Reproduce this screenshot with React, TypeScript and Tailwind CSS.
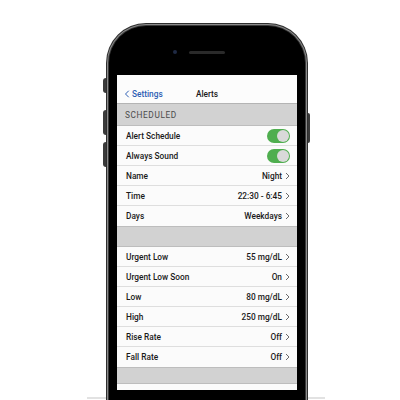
import { ChevronLeft } from 'lucide-react'

type Row = { label: string; value?: string; toggle?: boolean }

const SCHEDULED: Row[] = [
  { label: 'Alert Schedule', toggle: true },
  { label: 'Always Sound', toggle: true },
  { label: 'Name', value: 'Night' },
  { label: 'Time', value: '22:30 - 6:45' },
  { label: 'Days', value: 'Weekdays' },
]

const ALERTS: Row[] = [
  { label: 'Urgent Low', value: '55 mg/dL' },
  { label: 'Urgent Low Soon', value: 'On' },
  { label: 'Low', value: '80 mg/dL' },
  { label: 'High', value: '250 mg/dL' },
  { label: 'Rise Rate', value: 'Off' },
  { label: 'Fall Rate', value: 'Off' },
]

function Chevron() {
  return (
    <svg width="5" height="8" viewBox="0 0 5 8" className="ml-[3px] shrink-0">
      <path d="M1 1l3 3-3 3" fill="none" stroke="#6b6b6b" strokeWidth="1" />
    </svg>
  )
}

function Toggle() {
  return (
    <div className="w-[23px] h-[14px] rounded-full bg-[#4fae4f] flex items-center justify-end pr-px">
      <div className="w-[12px] h-[12px] rounded-full bg-[#d9d9d9]" />
    </div>
  )
}

function SettingRow({ row, last }: { row: Row; last?: boolean }) {
  return (
    <div className={`h-[20px] flex items-center justify-between pl-[9px] pr-[7px] pt-px bg-[#fbfbfb] ${last ? '' : 'border-b border-[#dedede]'}`}>
      <span>{row.label}</span>
      {row.toggle ? (
        <Toggle />
      ) : (
        <span className="flex items-center">
          {row.value}
          <Chevron />
        </span>
      )}
    </div>
  )
}

export default function App() {
  return (
    <div className="relative w-[400px] h-[400px] bg-white overflow-hidden" style={{ fontFamily: 'Roboto, "Liberation Sans", Arial, sans-serif' }}>
      {/* floor line */}
      <div className="absolute left-[87px] top-[397px] w-[238px] h-[2px] bg-[#e2e2e2]" />

      <div className="pt-[23px] pl-[106px]">
        <div className="relative w-[202px] h-[420px]">
          {/* side buttons */}
          <div className="absolute -left-[3px] top-[55px] w-[3px] h-[15px] rounded-l-sm bg-[#3a3a3a]" />
          <div className="absolute -left-[3px] top-[87px] w-[3px] h-[25px] rounded-l-sm bg-[#3a3a3a]" />
          <div className="absolute -left-[3px] top-[119px] w-[3px] h-[25px] rounded-l-sm bg-[#3a3a3a]" />
          <div className="absolute -right-[2px] top-[90px] w-[2px] h-[30px] rounded-r-sm bg-[#3a3a3a]" />

          <div className="w-full h-full rounded-[40px] bg-[#2e2e2e] p-px">
            <div className="w-full h-full rounded-[39px] bg-[#8a8a8a] p-px">
              <div className="w-full h-full rounded-[38px] bg-[#3a3a3a] p-px">
                <div className="w-full h-full rounded-[37px] bg-black pt-[49px] px-[8px] flex flex-col">
                  <div className="w-[180px] h-[315px] bg-white flex flex-col text-[8.3px] font-medium leading-none text-[#1a1a1a]">
                    {/* nav bar */}
                    <div className="relative h-[29px] flex items-center pt-[10px] border-b border-[#b4b4b4] bg-[#fcfcfc]">
                      <div className="flex items-center pl-[4px] text-[#2e5fb4]">
                        <ChevronLeft size={12} strokeWidth={2} className="-mr-[1px]" />
                        <span>Settings</span>
                      </div>
                      <div className="absolute inset-0 pt-[10px] flex items-center justify-center">Alerts</div>
                    </div>
                    {/* scheduled header */}
                    <div className="h-[22px] flex items-center pl-[8px] pt-px bg-[#d2d2d2] border-b border-[#bdbdbd] text-[#4a4a4a] font-normal tracking-[0.6px]">
                      SCHEDULED
                    </div>
                    {SCHEDULED.map((r, i) => (
                      <SettingRow key={r.label} row={r} last={i === SCHEDULED.length - 1} />
                    ))}
                    <div className="h-[21px] bg-[#d2d2d2] border-y border-[#bdbdbd]" />
                    {ALERTS.map((r, i) => (
                      <SettingRow key={r.label} row={r} last={i === ALERTS.length - 1} />
                    ))}
                    <div className="h-[17px] bg-[#d2d2d2] border-y border-[#bdbdbd]" />
                    <div className="flex-1 bg-[#fbfbfb]" />
                  </div>
                </div>
              </div>
            </div>
          </div>

          {/* camera and speaker */}
          <div className="absolute left-[67px] top-[27px] w-[4px] h-[4px] rounded-full bg-[#1f2a44]" />
          <div className="absolute left-[83px] top-[28px] w-[36px] h-[3px] rounded-full bg-[#2a2a2a]" />
        </div>
      </div>
    </div>
  )
}
